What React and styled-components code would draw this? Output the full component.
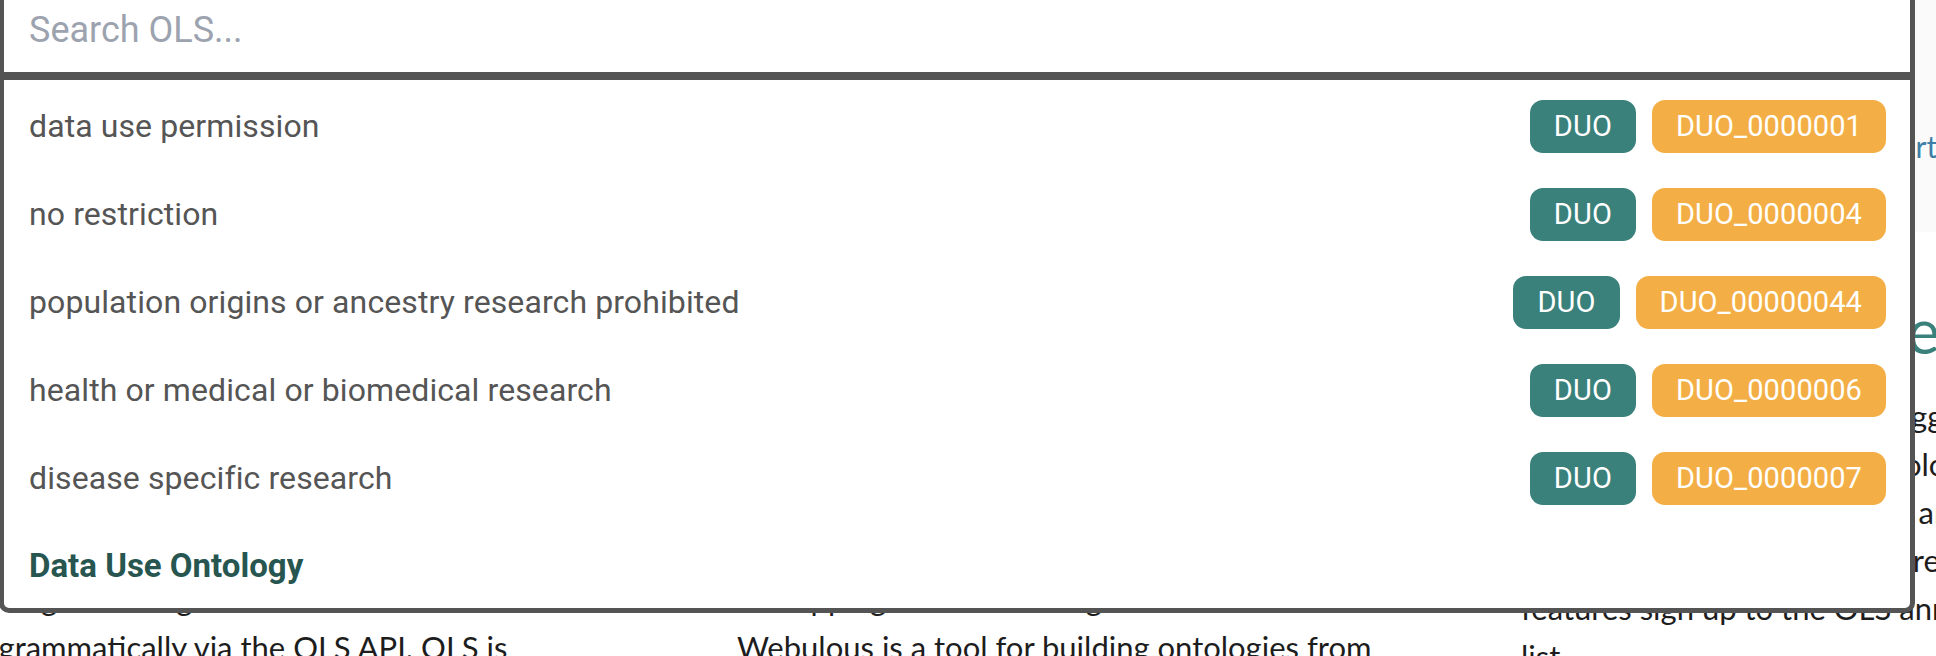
import React from "react";
import styled, { createGlobalStyle } from "styled-components";

const GlobalStyle = createGlobalStyle`
  html, body {
    margin: 0;
    padding: 0;
    background: #fff;
    overflow: hidden;
  }
`;

const Page = styled.div`
  position: relative;
  width: 1936px;
  height: 656px;
  overflow: hidden;
  font-family: Lato, "Liberation Sans", sans-serif;
  color: #1d1d1d;
`;

const Columns = styled.div`
  display: grid;
  grid-template-columns: repeat(3, 650px);
  column-gap: 134px;
  margin-left: -47px;
`;

const SearchPanel = styled(Columns)`
  height: 232px;
  background: #fafafa;
  padding-top: 126px;
  box-sizing: border-box;
`;

const Examples = styled.div`
  grid-column: 3;
  font-size: 30px;
  line-height: 40px;
  color: #555;
  padding-left: 100px;
`;

const ExampleLink = styled.span`
  color: #3d7fa6;
`;

const Content = styled(Columns)`
  padding-top: 62px;
`;

const Column = styled.div`
  display: flex;
  flex-direction: column;
`;

const Heading = styled.h2`
  margin: 0 0 ${(p) => p.$gap || 26}px;
  font-size: 62px;
  line-height: 72px;
  font-weight: 400;
  color: #3a807b;
`;

const Paragraph = styled.p`
  margin: 0;
  font-size: 31px;
  line-height: 48px;
`;

const SearchOverlay = styled.div`
  position: absolute;
  top: -16px;
  left: -1px;
  width: 1916px;
  font-family: Roboto, "Noto Sans", sans-serif;
`;

const SearchInput = styled.input`
  display: block;
  box-sizing: border-box;
  width: 100%;
  height: 92px;
  margin: 0;
  padding: 0 25px;
  border: 5px solid #545454;
  border-top-width: 4px;
  border-bottom-width: 4px;
  background: #fff;
  font-family: inherit;
  font-size: 36px;
  color: #333;
  outline: none;

  &::placeholder {
    color: #9ca3af;
  }
`;

const Dropdown = styled.div`
  box-sizing: border-box;
  border: 5px solid #545454;
  border-top-width: 4px;
  border-radius: 0 0 10px 10px;
  background: #fff;
  padding-top: 2px;
`;

const Row = styled.div`
  display: flex;
  align-items: center;
  justify-content: space-between;
  height: 88px;
  padding: 0 24px 0 25px;
  font-size: 32px;
  letter-spacing: 0.1px;
  color: #555;
`;

const BadgeGroup = styled.div`
  display: flex;
  gap: 16px;
`;

const Badge = styled.span`
  display: inline-flex;
  align-items: center;
  height: 53px;
  padding: 0 24px;
  border-radius: 13px;
  background: ${(p) => (p.$tone === "id" ? "#f3af45" : "#3a807b")};
  color: #fff;
  font-family: Roboto, "Open Sans", sans-serif;
  font-size: 29px;
`;

const OntologyTitle = styled.div`
  display: flex;
  align-items: center;
  height: 86px;
  padding-left: 25px;
  font-size: 33px;
  font-weight: 700;
  color: #275550;
`;

const results = [
  { label: "data use permission", id: "DUO_0000001" },
  { label: "no restriction", id: "DUO_0000004" },
  { label: "population origins or ancestry research prohibited", id: "DUO_00000044" },
  { label: "health or medical or biomedical research", id: "DUO_0000006" },
  { label: "disease specific research", id: "DUO_0000007" },
];

const App = () => {
  return (
    <>
      <GlobalStyle />
      <Page>
        <SearchPanel>
          <Examples>
            Examples: <ExampleLink>diabetes</ExampleLink>,{" "}
            <ExampleLink>cartilage</ExampleLink>
          </Examples>
        </SearchPanel>
        <Content>
          <Column>
            <Heading $gap={17}>About OLS</Heading>
            <Paragraph>
              The Ontology Lookup Service (OLS) is a repository for biomedical
              ontologies that aims to provide a single point of access to the
              latest ontology versions. You can browse the ontologies through
              the website as well as programmatically via the OLS API. OLS is
              developed and maintained by the Samples, Phenotypes and
              Ontologies Team (SPOT) at EMBL-EBI.
            </Paragraph>
          </Column>
          <Column>
            <Heading $gap={17}>Related Tools</Heading>
            <Paragraph>
              In addition to OLS the SPOT team also provides the OxO and Zooma
              services. OxO provides cross-ontology mappings between terms from
              different ontologies. Zooma is a service to assist in mapping data
              to ontologies in OLS and Webulous is a tool for building
              ontologies from spreadsheets.
            </Paragraph>
          </Column>
          <Column>
            <Heading>Report an Issue</Heading>
            <Paragraph>
              For feedback, enquiries or suggestion about OLS or to request a
              new ontology please use our GitHub issue tracker. For
              announcements relating to OLS, such as new releases and new
              features sign up to the OLS announce mailing list
            </Paragraph>
          </Column>
        </Content>

        <SearchOverlay>
          <SearchInput placeholder="Search OLS..." />
          <Dropdown>
            {results.map((item) => (
              <Row key={item.id}>
                {item.label}
                <BadgeGroup>
                  <Badge>DUO</Badge>
                  <Badge $tone="id">{item.id}</Badge>
                </BadgeGroup>
              </Row>
            ))}
            <OntologyTitle>Data Use Ontology</OntologyTitle>
          </Dropdown>
        </SearchOverlay>
      </Page>
    </>
  );
};

export default App;
